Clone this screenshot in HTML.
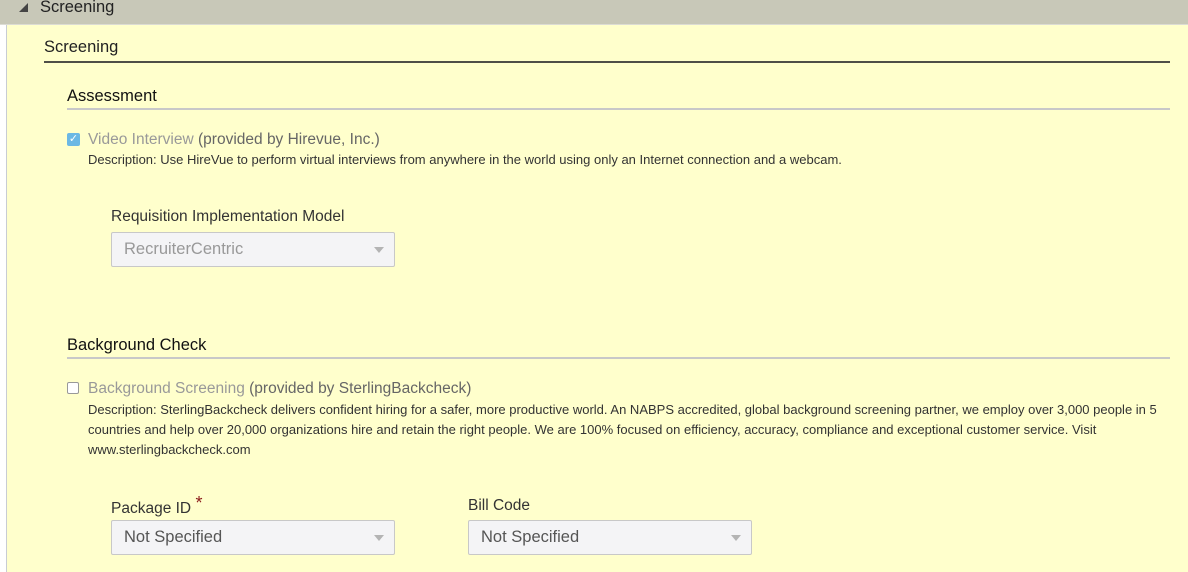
<!DOCTYPE html>
<html><head><style>
body{margin:0;width:1188px;height:572px;overflow:hidden;background:#fff;font-family:"Liberation Sans",sans-serif;position:relative}
.a{position:absolute;white-space:nowrap}
.hdr{position:absolute;left:0;top:0;width:1188px;height:24px;background:#c8c8b8;border-bottom:1px solid #dcdcd4}
.body{position:absolute;left:6px;top:25px;width:1182px;height:547px;background:#ffffcc;border-left:1px solid #c8ccd4}
.sel{position:absolute;height:35px;border:1px solid #c8c8c8;border-radius:2px;background:#f4f4f6;box-sizing:border-box;font-size:16.5px;color:#666;line-height:33px;padding-left:12px}
.sel:after{content:"";position:absolute;right:10px;top:14px;border-left:5px solid transparent;border-right:5px solid transparent;border-top:6px solid #b4b4b4}
.desc{font-size:13px;color:#333}
.lbl{font-size:15.5px;color:#333}
</style></head><body>
<div class="hdr"></div>
<div class="a" style="left:19px;top:3px;width:0;height:0;border-left:9px solid transparent;border-bottom:9px solid #444"></div>
<div class="a" style="left:40px;top:-2px;font-size:16.5px;color:#222">Screening</div>
<div class="body"></div>
<div class="a" style="left:44px;top:38px;font-size:16.5px;color:#222">Screening</div>
<div class="a" style="left:44px;top:61px;width:1126px;height:2px;background:#4f4f47"></div>
<div class="a" style="left:67px;top:87px;font-size:16.5px;color:#111">Assessment</div>
<div class="a" style="left:67px;top:108px;width:1103px;height:2px;background:#c8c8c8"></div>
<div class="a" style="left:67px;top:133px;width:13px;height:13px;border-radius:2px;background:#6cb8e4;color:#fff;font-size:11px;line-height:13px;text-align:center">✓</div>
<div class="a" style="left:88px;top:131px;font-size:15.5px"><span style="color:#999">Video Interview</span> <span style="color:#666">(provided by Hirevue, Inc.)</span></div>
<div class="a desc" style="left:88px;top:152px">Description: Use HireVue to perform virtual interviews from anywhere in the world using only an Internet connection and a webcam.</div>
<div class="a lbl" style="left:111px;top:208px">Requisition Implementation Model</div>
<div class="sel" style="left:111px;top:232px;width:284px;color:#999">RecruiterCentric</div>
<div class="a" style="left:67px;top:336px;font-size:16.5px;color:#111">Background Check</div>
<div class="a" style="left:67px;top:357px;width:1103px;height:2px;background:#c8c8c8"></div>
<div class="a" style="left:67px;top:382px;width:10px;height:10px;border:1px solid #999;border-radius:2px;background:#fff"></div>
<div class="a" style="left:88px;top:380px;font-size:15.5px"><span style="color:#999">Background Screening</span> <span style="color:#666">(provided by SterlingBackcheck)</span></div>
<div class="a desc" style="left:88px;top:400px;line-height:20px;white-space:normal;width:1072px">Description: SterlingBackcheck delivers confident hiring for a safer, more productive world. An NABPS accredited, global background screening partner, we employ over 3,000 people in 5 countries and help over 20,000 organizations hire and retain the right people. We are 100% focused on efficiency, accuracy, compliance and exceptional customer service. Visit www.sterlingbackcheck.com</div>
<div class="a lbl" style="left:111px;top:497px">Package ID <span style="color:#8b1a1a;font-size:18px;position:relative;top:-4px">*</span></div>
<div class="sel" style="left:111px;top:520px;width:284px;color:#555">Not Specified</div>
<div class="a lbl" style="left:468px;top:497px">Bill Code</div>
<div class="sel" style="left:468px;top:520px;width:284px;color:#555">Not Specified</div>
</body></html>
